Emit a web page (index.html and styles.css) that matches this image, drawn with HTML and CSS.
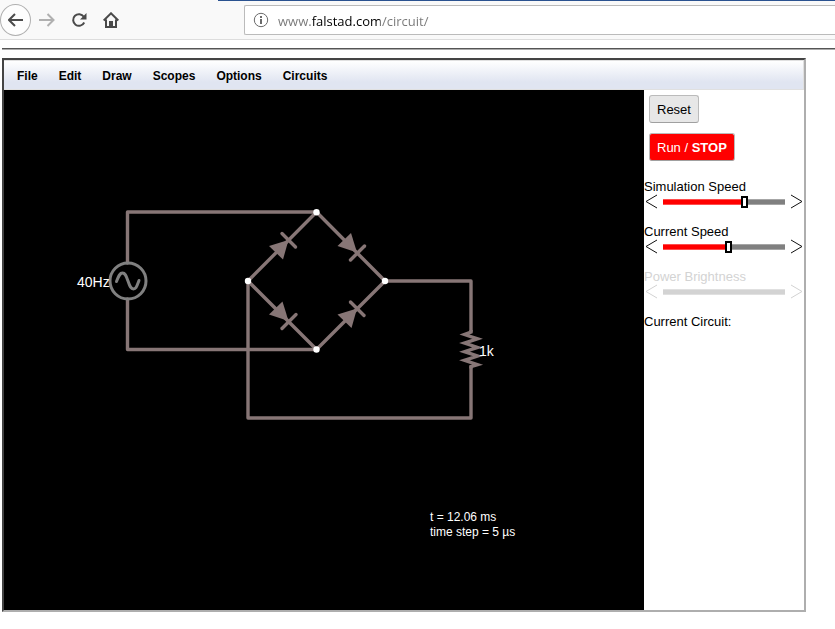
FILE: index.html
```html
<!DOCTYPE html>
<html lang="en">
<head>
    <meta charset="UTF-8">
    <meta name="viewport" content="width=device-width, initial-scale=1.0">
    <title>Circuit Simulator</title>
    <link rel="stylesheet" href="styles.css">
</head>
<body>
    <header class="browser">
        <div class="tab-line"></div>
        <div class="toolbar">
            <nav class="nav">
                <button class="nav-button back" aria-label="Back">
                    <svg width="16" height="16" viewBox="0 0 16 16"><path d="M15 8H1M7 2L1 8l6 6"/></svg>
                </button>
                <button class="nav-button forward" aria-label="Forward">
                    <svg width="16" height="16" viewBox="0 0 16 16"><path d="M0 8h14M8.500 2l6 6-6 6"/></svg>
                </button>
                <button class="nav-button" aria-label="Reload">
                    <svg width="16" height="16" viewBox="0 0 16 16"><path d="M12.800 4.800A5.800 5.800 0 1 0 13.200 10.500"/><path class="solid" d="M15.500 1v6.500H9z"/></svg>
                </button>
                <button class="nav-button" aria-label="Home">
                    <svg width="16" height="16" viewBox="0 0 16 16"><path d="M.7 8.500L8 1.300l7.300 7.200M3 7.500V15h10V7.500"/><path class="solid" d="M6 9h4v6H6z"/></svg>
                </button>
            </nav>
            <div class="address">
                <svg width="16" height="16" viewBox="0 0 16 16"><circle cx="8" cy="8" r="6.700"/><path d="M8 7v5M8 4v2"/></svg>
                <input class="url" type="text" value="www.falstad.com/circuit/" aria-label="Address">
            </div>
        </div>
    </header>

    <hr class="line">

    <main class="frame">
        <nav class="menu">
            <button>File</button>
            <button>Edit</button>
            <button>Draw</button>
            <button>Scopes</button>
            <button>Options</button>
            <button>Circuits</button>
        </nav>
        <div class="content">
            <div class="circuit">
                <svg viewBox="0 0 640 520">
                    <defs>
                        <!-- diode pointing up and to the right -->
                        <g id="diode-up">
                            <path class="part" d="M265 156l14 13.500 5.500-19.500z"/>
                            <path class="wire" d="M278 143.500l13.500 13.500"/>
                        </g>
                        <!-- diode pointing down and to the right -->
                        <g id="diode-down">
                            <path class="part" d="M333.500 156l13.500-13 6 19.500z"/>
                            <path class="wire" d="M360.500 156l-14 14"/>
                        </g>
                    </defs>

                    <!-- wires -->
                    <path class="wire" d="M123.500 173V122h189M123.500 209v50.500h189"/>
                    <path class="wire" d="M312.500 122L381 191l-68.500 68.500L244 191z"/>
                    <path class="wire" d="M381 191h86v50M467 277v51H244V191"/>
                    <path class="resistor" d="M467 240v2l-6.500 2.500 13 4.300-13 4.300 13 4.300-13 4.300 13 4.300-13 4.300 13 4.300-6.500 2v2"/>

                    <use href="#diode-up"/>
                    <use href="#diode-down"/>
                    <use href="#diode-down" x="-68.500" y="68.500"/>
                    <use href="#diode-up" x="68.500" y="68.500"/>

                    <!-- AC source -->
                    <circle class="source" cx="124" cy="191" r="18"/>
                    <path class="source" d="M112.500 191.500C115 185 116 183 118.500 183S122 185 124 191s3 8 5.500 8 3-2 5.500-8.500"/>

                    <circle class="node" cx="312.500" cy="122.300" r="3.200"/>
                    <circle class="node" cx="244" cy="191" r="3.200"/>
                    <circle class="node" cx="381" cy="191" r="3.200"/>
                    <circle class="node" cx="312.500" cy="259.500" r="3.200"/>

                    <text class="value" x="73" y="197">40Hz</text>
                    <text class="value" x="475" y="266">1k</text>
                    <text class="info" x="426" y="431">t = 12.06 ms</text>
                    <text class="info" x="426" y="446">time step = 5 µs</text>
                </svg>
            </div>
            <aside class="sidebar">
                <div class="buttons">
                    <button class="btn">Reset</button>
                    <button class="btn stop">Run / <b>STOP</b></button>
                </div>
                <div class="control">
                    <label for="sim">Simulation Speed</label>
                    <div class="slider">
                        <button aria-label="Slower simulation"><svg width="14" height="15" viewBox="0 0 14 15"><path d="M13 1L2 7.500 13 14"/></svg></button>
                        <input id="sim" type="range" min="0" max="100" value="68" style="--fill: 68%">
                        <button aria-label="Faster simulation"><svg width="14" height="15" viewBox="0 0 14 15"><path d="M1 1l11 6.500L1 14"/></svg></button>
                    </div>
                </div>
                <div class="control">
                    <label for="current">Current Speed</label>
                    <div class="slider">
                        <button aria-label="Slower current"><svg width="14" height="15" viewBox="0 0 14 15"><path d="M13 1L2 7.500 13 14"/></svg></button>
                        <input id="current" type="range" min="0" max="100" value="54" style="--fill: 54%">
                        <button aria-label="Faster current"><svg width="14" height="15" viewBox="0 0 14 15"><path d="M1 1l11 6.500L1 14"/></svg></button>
                    </div>
                </div>
                <div class="control off">
                    <label for="power">Power Brightness</label>
                    <div class="slider">
                        <button aria-label="Less bright" disabled><svg width="14" height="15" viewBox="0 0 14 15"><path d="M13 1L2 7.500 13 14"/></svg></button>
                        <input id="power" type="range" min="0" max="100" value="50" disabled>
                        <button aria-label="More bright" disabled><svg width="14" height="15" viewBox="0 0 14 15"><path d="M1 1l11 6.500L1 14"/></svg></button>
                    </div>
                </div>
                <p class="current">Current Circuit:</p>
            </aside>
        </div>
    </main>
</body>
</html>
```

FILE: styles.css
```css
* {
    box-sizing: border-box;
}
body {
    margin: 0;
    background: #fff;
    color: #000;
    font-family: "Liberation Sans", Arial, sans-serif;
    font-size: 13px;
    line-height: 15px;
}
button {
    margin: 0;
    padding: 0;
    border: none;
    background: none;
    color: inherit;
    font: inherit;
}
svg {
    display: block;
    fill: none;
}

/* browser bar */
.browser {
    background: #f9f9f9;
    border-bottom: 1px solid #ddd;
}
.tab-line {
    height: 1px;
    margin-left: 218px;
    background: #2a5290;
}
.toolbar {
    display: flex;
    align-items: center;
    height: 38px;
}
.nav {
    display: flex;
    align-items: center;
    width: 244px;
}
.nav-button {
    display: flex;
    align-items: center;
    justify-content: center;
    width: 32px;
    height: 32px;
    stroke: #4a4a4a;
    stroke-width: 2;
}
.nav-button .solid {
    fill: #4a4a4a;
    stroke: none;
}
.back {
    width: 31px;
    height: 32px;
    border: 1px solid #b0b0b0;
    border-radius: 50%;
    background: #fdfdfd;
}
.forward {
    stroke: #b0b0b0;
}
.address {
    flex: 1;
    display: flex;
    align-items: center;
    gap: 9px;
    height: 30px;
    padding-left: 8px;
    border: 1px solid #bbb;
    border-right: none;
    border-radius: 2px 0 0 2px;
    background: #fff;
    stroke: #6a6a6a;
    stroke-width: 1;
}
.address path {
    stroke-width: 2;
}
.url {
    flex: 1;
    min-width: 0;
    padding: 2px 0 0;
    border: none;
    outline: none;
    font-family: "Open Sans", "Noto Sans", sans-serif;
    font-size: 13px;
    line-height: 20px;
    /* only the domain is dark */
    color: transparent;
    background: linear-gradient(90deg, #777 33px, #000 33px, #000 102px, #777 102px);
    -webkit-background-clip: text;
    background-clip: text;
}

.line {
    height: 2px;
    margin: 8px 0 8px 2px;
    border: none;
    border-top: 1px solid #555;
    background: #aaa;
}

/* simulator */
.frame {
    margin: 0 29px 0 2px;
    border: 2px solid #444;
    border-right-color: #aeaeae;
    border-bottom-color: #aeaeae;
}
.menu {
    display: flex;
    gap: 1px;
    height: 30px;
    padding: 2px 0 0 3px;
    border: 1px solid #e0e0e0;
    border-left: none;
    background: linear-gradient(#fff, #e0e5f1 75%);
    font-size: 12px;
    font-weight: bold;
}
.menu button {
    padding: 0 10px;
}
.content {
    display: flex;
}
.circuit {
    flex: 1;
    background: #000;
}
.circuit svg {
    width: 100%;
}
.wire {
    stroke: #877676;
    stroke-width: 3.4;
    stroke-linecap: round;
    stroke-linejoin: round;
}
.resistor {
    stroke: #877676;
    stroke-width: 3.4;
    stroke-miterlimit: 10;
}
.part {
    fill: #877676;
}
.source {
    stroke: #808080;
    stroke-width: 3;
    stroke-linecap: round;
}
.node {
    fill: #fff;
}
.value {
    fill: #fff;
    font-size: 14px;
}
.info {
    fill: #fff;
    font-size: 12px;
}

.sidebar {
    width: 160px;
    padding-top: 5px;
}
.buttons {
    display: flex;
    flex-direction: column;
    align-items: flex-start;
    gap: 10px;
    padding: 0 5px;
    margin-bottom: 18px;
}
.btn {
    height: 28px;
    padding: 0 7px;
    border: 1px solid #bbb;
    border-bottom-color: #a0a0a0;
    border-radius: 3px;
    background: #e7e7e7;
}
.stop {
    background: #f00;
    color: #fff;
}
.control {
    margin-bottom: 15px;
}
.control label {
    display: block;
}
.slider {
    display: flex;
    align-items: center;
    gap: 5px;
}
.slider svg {
    stroke: #111;
}
.slider input {
    -webkit-appearance: none;
    appearance: none;
    flex: 1;
    min-width: 0;
    height: 12px;
    margin: 0;
    background: none;
}
.slider input::-webkit-slider-runnable-track {
    height: 6px;
    border: 1px solid rgba(255, 255, 255, 0.3);
    border-width: 1px 0;
    background: linear-gradient(90deg, #f00 var(--fill), #808080 var(--fill)) border-box;
}
.slider input::-webkit-slider-thumb {
    -webkit-appearance: none;
    width: 7px;
    height: 12px;
    margin-top: -4px;
    border: 2px solid #000;
    background: #fff;
}
.off {
    color: #d3d3d3;
}
.off .slider svg {
    stroke: #d3d3d3;
}
.off input::-webkit-slider-runnable-track {
    background: #d3d3d3;
}
.off input::-webkit-slider-thumb {
    visibility: hidden;
}
.current {
    margin: 0;
}
```
